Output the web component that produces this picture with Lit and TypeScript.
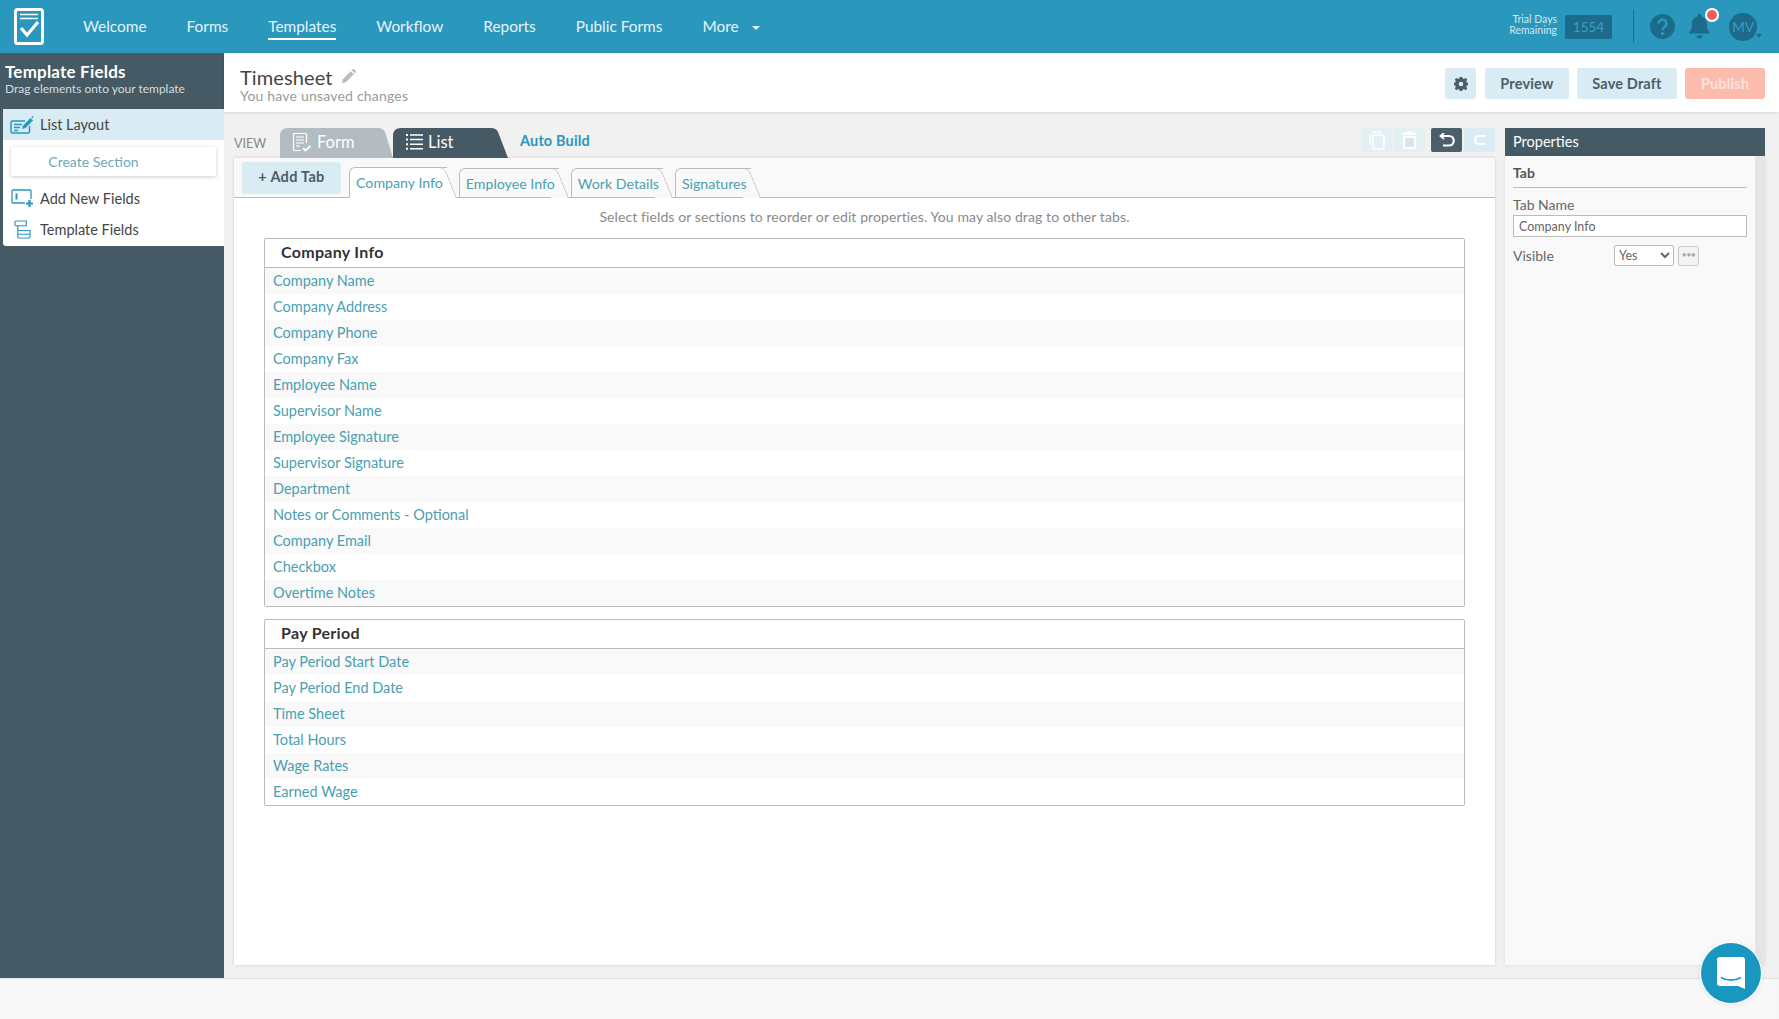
import { LitElement, html, css, svg } from 'lit';
import { customElement } from 'lit/decorators.js';

const navItems = ['Welcome', 'Forms', 'Templates', 'Workflow', 'Reports', 'Public Forms', 'More'];
const tabs = ['Company Info', 'Employee Info', 'Work Details', 'Signatures'];
const sections = [
  {
    title: 'Company Info',
    fields: [
      'Company Name',
      'Company Address',
      'Company Phone',
      'Company Fax',
      'Employee Name',
      'Supervisor Name',
      'Employee Signature',
      'Supervisor Signature',
      'Department',
      'Notes or Comments - Optional',
      'Company Email',
      'Checkbox',
      'Overtime Notes',
    ],
  },
  {
    title: 'Pay Period',
    fields: ['Pay Period Start Date', 'Pay Period End Date', 'Time Sheet', 'Total Hours', 'Wage Rates', 'Earned Wage'],
  },
];

const logoIcon = svg`<svg width="30" height="37" viewBox="0 0 30 37" fill="none">
  <rect x="1.5" y="1.5" width="27" height="34" rx="2" stroke="#fff" stroke-width="3"/>
  <path d="M6 6.5h18M6 10.5h18" stroke="#fff" stroke-width="1.6"/>
  <path d="M7 20l6 7 11-13" stroke="#fff" stroke-width="3.2"/>
</svg>`;

const listLayoutIcon = svg`<svg width="24" height="20" viewBox="0 0 24 20" fill="none" stroke="#2a97bd" stroke-width="1.5">
  <path d="M15 6H2.5a1.5 1.5 0 0 0-1.500 1.500v9a1.500 1.500 0 0 0 1.500 1.500H18a1.500 1.500 0 0 0 1.500-1.500V11"/>
  <path d="M4 9.500h8M4 12.500h6M4 15.500h4"/>
  <path d="M12 14l1-3.500L20.500 3l2.500 2.500L15.500 13z" fill="#2a97bd" stroke="none"/>
  <path d="M21.500 2l1-1 1 1-1 1.500z" fill="#2a97bd" stroke="none"/>
</svg>`;

const addFieldIcon = svg`<svg width="23" height="19" viewBox="0 0 23 19" fill="none" stroke="#2a97bd" stroke-width="1.300">
  <path d="M14 14H2a1 1 0 0 1-1-1V2a1 1 0 0 1 1-1h17a1 1 0 0 1 1 1v8"/>
  <path d="M5.500 4.500v6" stroke-width="2"/>
  <path d="M18.500 11v7M15 14.500h7" stroke-width="2.200"/>
</svg>`;

const templateFieldsIcon = svg`<svg width="17" height="19" viewBox="0 0 18 20" fill="none" stroke="#2a97bd" stroke-width="1.200">
  <path d="M2 1h11v5H2a1 1 0 0 1-1-1V2a1 1 0 0 1 1-1z"/>
  <path d="M4 6v5M4 11h13v4H4zM4 15v3a1 1 0 0 0 1 1h11a1 1 0 0 0 1-1v-3"/>
</svg>`;

const pencilIcon = svg`<svg width="15" height="15" viewBox="0 0 15 15" fill="#bbb">
  <path d="M1 14l.8-3.800L9.800 2.200l3 3L4.800 13.200z"/>
  <path d="M10.700 1.300l1-1a1 1 0 0 1 1.300 0l1.700 1.700a1 1 0 0 1 0 1.300l-1 1z"/>
</svg>`;

const gearIcon = svg`<svg width="14" height="14" viewBox="0 0 24 24" fill="#4a5f69">
  <path fill-rule="evenodd" d="M10 0h4l.7 3.300 2.300 1 2.900-1.800 2.800 2.800L21 8.100l1 2.300 3 .6v4l-3 .6-1 2.300 1.700 2.800-2.800 2.800-2.900-1.800-2.300 1L14 26h-4l-.7-3.300-2.300-1-2.900 1.800-2.800-2.800L3 17.900l-1-2.300-3-.6v-4l3-.6 1-2.300-1.700-2.800 2.800-2.800L7 4.300l2.300-1zM12 9a4 4 0 1 0 0 8 4 4 0 0 0 0-8z" transform="translate(0 -1)"/>
</svg>`;

const formIcon = svg`<svg width="20" height="20" viewBox="0 0 20 20" fill="none" stroke="#fff" stroke-width="1.200">
  <path d="M9 18.500H2.500a1 1 0 0 1-1-1V1.500h12a1 1 0 0 1 1 1V11"/>
  <path d="M4 5h8M4 8h8M4 11h8M4 14h4"/>
  <path d="M11 16l2.500 2.500L18.500 14" stroke-width="1.800"/>
</svg>`;

const listIcon = svg`<svg width="17" height="16" viewBox="0 0 17 16" fill="#fff">
  <path d="M0 0h2v2H0zM0 4.600h2v2H0zM0 9.200h2v2H0zM0 13.800h2v2H0z"/>
  <path d="M4 .2h13v1.500H4zM4 4.800h13v1.500H4zM4 9.400h13v1.500H4zM4 14h13v1.500H4z"/>
</svg>`;

const copyIcon = svg`<svg width="16" height="19" viewBox="0 0 16 19" fill="none" stroke="#fff" stroke-width="1.500">
  <path d="M3 1h10M1 3v11"/><rect x="4" y="4" width="11" height="14"/>
</svg>`;

const trashIcon = svg`<svg width="15" height="18" viewBox="0 0 15 18" fill="#fff">
  <path d="M5 0h5v1.500h4.500V4H.5V1.500H5z"/>
  <path fill-rule="evenodd" d="M1 5h13v11.500a1.500 1.500 0 0 1-1.500 1.500h-10A1.500 1.500 0 0 1 1 16.500zm2 2v9h9V7z"/>
  <rect x="3" y="7" width="9" height="9" fill="#dbe5e8"/>
</svg>`;

const undoIcon = svg`<svg width="16" height="14" viewBox="0 0 16 14" fill="none" stroke="#fff" stroke-width="2.200">
  <path d="M1.500 3H10a4.200 4.200 0 0 1 0 9.500H4"/><path d="M5 0L1.500 3 5 6" stroke-width="1.800"/>
</svg>`;

const redoIcon = svg`<svg width="14" height="12" viewBox="0 0 14 12" fill="none" stroke="#fff" stroke-width="2.200">
  <path d="M13 2H6a4 4 0 0 0 0 8h6"/>
</svg>`;

const helpIcon = svg`<svg width="25" height="25" viewBox="0 0 25 25">
  <circle cx="12.500" cy="12.500" r="12.500" fill="#1c6b8b"/>
  <path d="M8.500 9.500a4 4 0 1 1 6 3.500c-1.300.8-2 1.400-2 3" fill="none" stroke="#2a97bd" stroke-width="2.600"/>
  <circle cx="12.500" cy="19.500" r="1.700" fill="#2a97bd"/>
</svg>`;

const bellIcon = svg`<svg width="21" height="27" viewBox="0 0 21 27" fill="#1c6b8b">
  <path d="M10.500 1a2 2 0 0 1 2 2v.5c3.500 1 5.500 4 5.500 7.500 0 5 1 6.500 3 8.500v1H0v-1c2-2 3-3.500 3-8.500 0-3.500 2-6.500 5.500-7.500V3a2 2 0 0 1 2-2z"/>
  <path d="M7.500 22.500h6a3 3 0 0 1-6 0z"/>
</svg>`;

const chatIcon = svg`<svg width="28" height="32" viewBox="0 0 28 32">
  <path d="M3 0h22a3 3 0 0 1 3 3v29l-7-3H3a3 3 0 0 1-3-3V3a3 3 0 0 1 3-3z" fill="#fff"/>
  <path d="M4 20.500c6 3.500 14 3.500 20 0" fill="none" stroke="#1a97c0" stroke-width="1.600"/>
</svg>`;

@customElement('app-root')
export class AppRoot extends LitElement {
  static styles = css`
    :host {
      display: flex;
      flex-direction: column;
      height: 1019px;
      overflow: hidden;
      font-family: Lato, 'Open Sans', sans-serif;
      font-size: 14.500px;
      color: #444;
      background: #f8f8f8;
    }

    /* top bar */
    .topbar {
      display: flex;
      align-items: center;
      flex: none;
      height: 53px;
      background: #2a97bd;
      color: #fff;
    }
    .logo {
      display: flex;
      margin-left: 14px;
      margin-right: 39px;
    }
    .nav {
      display: flex;
      gap: 40px;
      margin-top: -2px;
      font-size: 15.400px;
    }
    .nav a {
      position: relative;
      color: #e6f3f8;
    }
    .nav a.current::after {
      content: '';
      position: absolute;
      left: 0;
      right: 0;
      bottom: -5px;
      height: 2px;
      background: #fff;
    }
    .caret {
      display: inline-block;
      margin-left: 13px;
      vertical-align: middle;
      border: 4px solid transparent;
      border-top: 4px solid #e6f3f8;
      border-bottom: 0;
    }
    .topright {
      display: flex;
      align-items: center;
      margin-left: auto;
      margin-right: 22px;
    }
    .trial {
      margin-top: -3px;
      font-size: 10.500px;
      line-height: 11px;
      text-align: right;
      color: #cfe8f2;
    }
    .count {
      display: flex;
      align-items: center;
      justify-content: center;
      width: 47px;
      height: 24px;
      margin-left: 8px;
      border-radius: 2px;
      background: #1c6b8b;
      color: #3f9dc0;
      font-size: 13.500px;
    }
    .sep {
      width: 1px;
      height: 33px;
      margin: 0 16px 0 21px;
      background: #1c6b8b;
    }
    .help {
      display: flex;
      margin-right: 14px;
    }
    .bell {
      position: relative;
      display: flex;
      margin-right: 19px;
    }
    .dot {
      position: absolute;
      top: -5px;
      right: -9px;
      width: 10px;
      height: 10px;
      border: 2px solid #fff;
      border-radius: 50%;
      background: #ee5c5c;
    }
    .avatar {
      position: relative;
      display: flex;
      align-items: center;
      justify-content: center;
      width: 28px;
      height: 28px;
      border-radius: 50%;
      background: #1c6b8b;
      color: #3f9dc0;
      font-size: 13.500px;
    }
    .avatar::after {
      content: '';
      position: absolute;
      right: -5px;
      bottom: 3px;
      border: 3.500px solid transparent;
      border-top: 4px solid #1c6b8b;
      border-bottom: 0;
    }

    .body {
      display: flex;
      flex: 1;
      min-height: 0;
    }

    /* left column */
    .sidebar {
      flex: none;
      width: 224px;
      background: #455a64;
    }
    .side-head {
      height: 56px;
      padding: 8px 0 0 5px;
      box-sizing: border-box;
      color: #fff;
    }
    .side-head b {
      display: block;
      font-size: 17px;
      line-height: 21px;
      font-weight: 700;
      letter-spacing: 0.200px;
    }
    .side-head span {
      display: block;
      font-size: 12px;
      line-height: 14px;
      color: #d5dcdf;
    }
    .side-menu {
      margin-left: 3px;
      padding-bottom: 1px;
      background: #fff;
      border-bottom-left-radius: 3px;
    }
    .side-row {
      display: flex;
      align-items: center;
      height: 31px;
      color: #444;
    }
    .side-row.active {
      background: #d9ebf3;
    }
    .side-icon {
      display: flex;
      justify-content: center;
      flex: none;
      width: 32px;
      margin-left: 3px;
      margin-right: 2px;
    }
    .create {
      display: flex;
      align-items: center;
      justify-content: center;
      height: 29px;
      margin: 7px 8px 7px 8px;
      padding-right: 40px;
      box-shadow: 0 1px 4px rgba(0, 0, 0, 0.200);
      font-size: 14px;
      line-height: 16px;
      color: #6aa9bb;
    }

    .main {
      display: flex;
      flex: 1;
      flex-direction: column;
      min-width: 0;
      background: #f1f1f1;
    }

    /* title bar */
    .titlebar {
      display: flex;
      flex: none;
      align-items: center;
      justify-content: space-between;
      height: 59px;
      padding: 0 14px 0 16px;
      box-sizing: border-box;
      background: #fff;
      box-shadow: 0 1px 3px rgba(0, 0, 0, 0.100);
    }
    .doc-head {
      padding-top: 4px;
    }
    .doc-title {
      display: flex;
      align-items: center;
      gap: 8px;
      font-size: 20px;
      line-height: 22px;
      letter-spacing: 0.100px;
      color: #444;
    }
    .doc-sub {
      font-size: 14px;
      line-height: 16px;
      letter-spacing: 0.200px;
      color: #9a9a9a;
    }
    .actions {
      display: flex;
      gap: 8px;
      margin-top: 2px;
    }
    .btn {
      display: flex;
      align-items: center;
      justify-content: center;
      height: 31px;
      border-radius: 3px;
      background: #d9ebf3;
      color: #4a5f69;
      font-weight: 700;
      letter-spacing: 0.150px;
    }
    .btn.gear {
      width: 31px;
      margin-right: 1px;
    }
    .btn.preview {
      width: 84px;
    }
    .btn.draft {
      width: 100px;
    }
    .btn.publish {
      width: 80px;
      background: #fbbcae;
      color: #fde3dd;
    }

    /* work area */
    .work {
      display: flex;
      flex: 1;
      gap: 10px;
      min-height: 0;
      padding: 16px 14px 13px 10px;
    }
    .center {
      display: flex;
      flex: none;
      flex-direction: column;
      width: 1261px;
    }
    .viewbar {
      display: flex;
      align-items: flex-end;
      flex: none;
      height: 30px;
    }
    .viewlabel {
      width: 46px;
      align-self: center;
      margin-top: 1px;
      font-size: 12.500px;
      color: #888;
    }
    .vtab {
      display: flex;
      align-items: center;
      gap: 5px;
      height: 30px;
      padding-bottom: 2px;
      box-sizing: border-box;
      color: #fff;
      font-size: 16.500px;
    }
    .vtab.form {
      width: 113px;
      padding-left: 12px;
      background: #b2bcc1;
      clip-path: path('M0 30V8Q0 0 8 0H98Q103 0 105 4L113 30Z');
    }
    .vtab.list {
      width: 115px;
      padding-left: 13px;
      background: #455a64;
      clip-path: path('M0 30V8Q0 0 8 0H98Q103 0 105 4L115 30Z');
    }
    .autobuild {
      align-self: center;
      margin: -5px 0 0 12px;
      color: #2a97bd;
      font-weight: 700;
      letter-spacing: 0.150px;
    }
    .tools {
      display: flex;
      gap: 2px;
      align-self: flex-start;
      margin-left: auto;
    }
    .tool {
      display: flex;
      align-items: center;
      justify-content: center;
      width: 31px;
      height: 24px;
      background: #e2eff3;
    }
    .tool.on {
      margin-left: 4px;
      border-radius: 2px;
      background: #4a5f69;
    }
    .tool.redo {
      background: #d9ebf3;
    }

    .panel {
      display: flex;
      flex: 1;
      flex-direction: column;
      min-height: 0;
      background: #fff;
      box-shadow: 0 0 3px rgba(0, 0, 0, 0.150);
    }
    .tabbar {
      display: flex;
      flex: none;
      height: 40px;
      padding-left: 8px;
      box-sizing: border-box;
      border-bottom: 1px solid #bbb;
      background: #f9f9f9;
    }
    .addtab {
      display: flex;
      align-items: center;
      justify-content: center;
      width: 99px;
      height: 32px;
      margin: 4px 8px 0 0;
      padding-bottom: 3px;
      box-sizing: border-box;
      border-radius: 3px;
      background: #d9ebf3;
      color: #4a5f69;
      font-weight: 700;
      letter-spacing: 0.300px;
    }
    .tab {
      position: relative;
      display: flex;
      align-items: center;
      align-self: flex-end;
      height: 30px;
      margin-bottom: -1px;
      padding: 0 4px 1px 6px;
      margin-right: 12px;
      box-sizing: border-box;
      border: 1px solid #bbb;
      border-right: 0;
      border-bottom: 0;
      border-top-left-radius: 6px;
      font-size: 14.200px;
      color: #4a9fb0;
    }
    .tab::after {
      content: '';
      position: absolute;
      top: -1px;
      bottom: 0;
      right: -10px;
      width: 18px;
      box-sizing: border-box;
      border-top: 1px solid #bbb;
      border-right: 1px solid #bbb;
      border-top-right-radius: 6px;
      transform: skewX(22deg);
      transform-origin: bottom right;
      background: #f9f9f9;
      z-index: 0;
    }
    .tab span {
      position: relative;
      z-index: 1;
    }
    .tab.active {
      background: #fff;
      height: 31px;
      z-index: 1;
    }
    .tab.active::after {
      background: #fff;
    }
    .hint {
      flex: none;
      margin: 10px 0 12px;
      line-height: 18px;
      text-align: center;
      font-size: 14px;
      letter-spacing: 0.100px;
      color: #8a8a8a;
    }
    .section {
      flex: none;
      margin: 0 30px 12px;
      border: 1px solid #bbb;
      border-radius: 2px;
    }
    .section h3 {
      margin: 0;
      padding-left: 16px;
      height: 28px;
      border-bottom: 1px solid #bbb;
      line-height: 25px;
      font-size: 16px;
      font-weight: 700;
      letter-spacing: 0.300px;
      color: #333;
    }
    .field {
      height: 26px;
      padding-left: 8px;
      line-height: 26px;
      color: #4a9fb0;
    }
    .field:nth-child(even) {
      background: #f9f9f9;
    }

    /* properties */
    .props {
      display: flex;
      flex: none;
      flex-direction: column;
      width: 260px;
    }
    .props-head {
      flex: none;
      height: 28px;
      padding-left: 8px;
      line-height: 28px;
      background: #455a64;
      color: #fff;
    }
    .props-wrap {
      display: flex;
      flex: 1;
      border-right: 10px solid #e5e5e5;
      background: #f9f9f9;
      box-shadow: 0 0 3px rgba(0, 0, 0, 0.100);
    }
    .props-body {
      flex: 1;
      padding: 6px 8px;
    }
    .props-body h4 {
      margin: 0 0 9px;
      height: 25px;
      border-bottom: 1px solid #bbb;
      line-height: 22px;
      font-size: 14px;
      font-weight: 700;
      color: #555;
    }
    .props-body label {
      display: block;
      line-height: 16px;
      font-size: 14px;
      color: #666;
    }
    .props-body input {
      display: block;
      width: 100%;
      height: 22px;
      margin: 2px 0 8px;
      padding: 0 5px;
      box-sizing: border-box;
      border: 1px solid #bbb;
      background: #fff;
      font: 12.500px Lato, sans-serif;
      color: #666;
    }
    .vis {
      display: flex;
      align-items: center;
    }
    .vis label {
      width: 101px;
    }
    .vis select {
      width: 60px;
      height: 21px;
      padding: 0;
      border: 1px solid #bbb;
      border-radius: 2px;
      background: #fff;
      font: 12.500px Lato, sans-serif;
      color: #666;
    }
    .more {
      width: 21px;
      height: 20px;
      margin-left: 4px;
      box-sizing: border-box;
      border: 1px solid #ccc;
      border-radius: 2px;
      background: #f3f3f3;
      color: #aaa;
      font-size: 9px;
      line-height: 15px;
      text-align: center;
      letter-spacing: -0.500px;
    }

    .footer {
      flex: none;
      height: 41px;
      background: #f8f8f8;
      box-shadow: inset 0 1px 1px rgba(0, 0, 0, 0.100);
    }

    .chat {
      position: fixed;
      left: 1701px;
      top: 943px;
      display: flex;
      align-items: center;
      justify-content: center;
      width: 60px;
      height: 60px;
      border-radius: 50%;
      background: #1a97c0;
      box-shadow: 0 0 0 1px #fff, 0 1px 6px rgba(0, 0, 0, 0.100);
    }
  `;

  renderTopbar() {
    return html`<header class="topbar">
      <div class="logo">${logoIcon}</div>
      <nav class="nav">
        ${navItems.map(
          item => html`<a class=${item === 'Templates' ? 'current' : ''}
            >${item}${item === 'More' ? html`<i class="caret"></i>` : ''}</a
          >`
        )}
      </nav>
      <div class="topright">
        <div class="trial">Trial Days<br />Remaining</div>
        <div class="count">1554</div>
        <div class="sep"></div>
        <div class="help">${helpIcon}</div>
        <div class="bell">${bellIcon}<i class="dot"></i></div>
        <div class="avatar">MV</div>
      </div>
    </header>`;
  }

  renderSidebar() {
    return html`<aside class="sidebar">
      <div class="side-head">
        <b>Template Fields</b>
        <span>Drag elements onto your template</span>
      </div>
      <div class="side-menu">
        <div class="side-row active"><div class="side-icon">${listLayoutIcon}</div>List Layout</div>
        <div class="create">Create Section</div>
        <div class="side-row"><div class="side-icon">${addFieldIcon}</div>Add New Fields</div>
        <div class="side-row"><div class="side-icon">${templateFieldsIcon}</div>Template Fields</div>
      </div>
    </aside>`;
  }

  renderCenter() {
    return html`<section class="center">
      <div class="viewbar">
        <div class="viewlabel">VIEW</div>
        <div class="vtab form">${formIcon}Form</div>
        <div class="vtab list">${listIcon}List</div>
        <div class="autobuild">Auto Build</div>
        <div class="tools">
          <div class="tool">${copyIcon}</div>
          <div class="tool">${trashIcon}</div>
          <div class="tool on">${undoIcon}</div>
          <div class="tool redo">${redoIcon}</div>
        </div>
      </div>
      <div class="panel">
        <div class="tabbar">
          <div class="addtab">+ Add Tab</div>
          ${tabs.map(
            (tab, i) => html`<div class="tab ${i === 0 ? 'active' : ''}"><span>${tab}</span></div>`
          )}
        </div>
        <div class="hint">Select fields or sections to reorder or edit properties. You may also drag to other tabs.</div>
        ${sections.map(
          s => html`<div class="section">
            <h3>${s.title}</h3>
            ${s.fields.map(f => html`<div class="field">${f}</div>`)}
          </div>`
        )}
      </div>
    </section>`;
  }

  renderProps() {
    return html`<section class="props">
      <div class="props-head">Properties</div>
      <div class="props-wrap">
        <div class="props-body">
          <h4>Tab</h4>
          <label>Tab Name</label>
          <input value="Company Info" />
          <div class="vis">
            <label>Visible</label>
            <select><option>Yes</option><option>No</option></select>
            <div class="more">•••</div>
          </div>
        </div>
      </div>
    </section>`;
  }

  render() {
    return html`
      ${this.renderTopbar()}
      <div class="body">
        ${this.renderSidebar()}
        <main class="main">
          <div class="titlebar">
            <div class="doc-head">
              <div class="doc-title">Timesheet ${pencilIcon}</div>
              <div class="doc-sub">You have unsaved changes</div>
            </div>
            <div class="actions">
              <div class="btn gear">${gearIcon}</div>
              <div class="btn preview">Preview</div>
              <div class="btn draft">Save Draft</div>
              <div class="btn publish">Publish</div>
            </div>
          </div>
          <div class="work">${this.renderCenter()} ${this.renderProps()}</div>
        </main>
      </div>
      <div class="footer"></div>
      <div class="chat">${chatIcon}</div>
    `;
  }
}
